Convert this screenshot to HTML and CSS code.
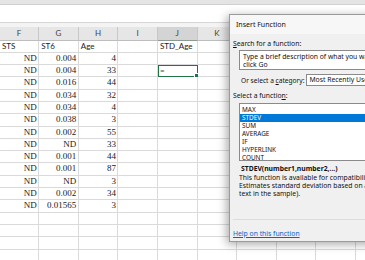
FILE: index.html
```html
<!DOCTYPE html>
<html lang="en">
<head>
  <meta charset="UTF-8">
  <title>Insert Function</title>
  <link rel="stylesheet" href="styles.css">
</head>
<body>
  <div class="app">
    <div class="ribbon-edge"></div>
    <div class="formula-bar"></div>
    <div class="sheet">
      <div class="row head">
        <div class="cell">F</div><div class="cell">G</div><div class="cell">H</div><div class="cell">I</div><div class="cell sel">J</div><div class="cell">K</div><div class="cell">L</div><div class="cell">M</div><div class="cell">N</div><div class="cell">O</div>
      </div>
      <div class="row">
        <div class="cell txt">STS</div><div class="cell txt">ST6</div><div class="cell txt">Age</div><div class="cell"></div><div class="cell txt">STD_Age</div><div class="cell"></div><div class="cell"></div><div class="cell"></div><div class="cell"></div><div class="cell"></div>
      </div>
      <div class="row">
        <div class="cell num">ND</div><div class="cell num">0.004</div><div class="cell num">4</div><div class="cell"></div><div class="cell"></div><div class="cell"></div><div class="cell"></div><div class="cell"></div><div class="cell"></div><div class="cell"></div>
      </div>
      <div class="row">
        <div class="cell num">ND</div><div class="cell num">0.004</div><div class="cell num">33</div><div class="cell"></div><div class="cell txt active">=</div><div class="cell"></div><div class="cell"></div><div class="cell"></div><div class="cell"></div><div class="cell"></div>
      </div>
      <div class="row">
        <div class="cell num">ND</div><div class="cell num">0.016</div><div class="cell num">44</div><div class="cell"></div><div class="cell"></div><div class="cell"></div><div class="cell"></div><div class="cell"></div><div class="cell"></div><div class="cell"></div>
      </div>
      <div class="row">
        <div class="cell num">ND</div><div class="cell num">0.034</div><div class="cell num">32</div><div class="cell"></div><div class="cell"></div><div class="cell"></div><div class="cell"></div><div class="cell"></div><div class="cell"></div><div class="cell"></div>
      </div>
      <div class="row">
        <div class="cell num">ND</div><div class="cell num">0.034</div><div class="cell num">4</div><div class="cell"></div><div class="cell"></div><div class="cell"></div><div class="cell"></div><div class="cell"></div><div class="cell"></div><div class="cell"></div>
      </div>
      <div class="row">
        <div class="cell num">ND</div><div class="cell num">0.038</div><div class="cell num">3</div><div class="cell"></div><div class="cell"></div><div class="cell"></div><div class="cell"></div><div class="cell"></div><div class="cell"></div><div class="cell"></div>
      </div>
      <div class="row">
        <div class="cell num">ND</div><div class="cell num">0.002</div><div class="cell num">55</div><div class="cell"></div><div class="cell"></div><div class="cell"></div><div class="cell"></div><div class="cell"></div><div class="cell"></div><div class="cell"></div>
      </div>
      <div class="row">
        <div class="cell num">ND</div><div class="cell num">ND</div><div class="cell num">33</div><div class="cell"></div><div class="cell"></div><div class="cell"></div><div class="cell"></div><div class="cell"></div><div class="cell"></div><div class="cell"></div>
      </div>
      <div class="row">
        <div class="cell num">ND</div><div class="cell num">0.001</div><div class="cell num">44</div><div class="cell"></div><div class="cell"></div><div class="cell"></div><div class="cell"></div><div class="cell"></div><div class="cell"></div><div class="cell"></div>
      </div>
      <div class="row">
        <div class="cell num">ND</div><div class="cell num">0.001</div><div class="cell num">87</div><div class="cell"></div><div class="cell"></div><div class="cell"></div><div class="cell"></div><div class="cell"></div><div class="cell"></div><div class="cell"></div>
      </div>
      <div class="row">
        <div class="cell num">ND</div><div class="cell num">ND</div><div class="cell num">3</div><div class="cell"></div><div class="cell"></div><div class="cell"></div><div class="cell"></div><div class="cell"></div><div class="cell"></div><div class="cell"></div>
      </div>
      <div class="row">
        <div class="cell num">ND</div><div class="cell num">0.002</div><div class="cell num">34</div><div class="cell"></div><div class="cell"></div><div class="cell"></div><div class="cell"></div><div class="cell"></div><div class="cell"></div><div class="cell"></div>
      </div>
      <div class="row">
        <div class="cell num">ND</div><div class="cell num">0.01565</div><div class="cell num">3</div><div class="cell"></div><div class="cell"></div><div class="cell"></div><div class="cell"></div><div class="cell"></div><div class="cell"></div><div class="cell"></div>
      </div>
      <div class="row">
        <div class="cell"></div><div class="cell"></div><div class="cell"></div><div class="cell"></div><div class="cell"></div><div class="cell"></div><div class="cell"></div><div class="cell"></div><div class="cell"></div><div class="cell"></div>
      </div>
      <div class="row">
        <div class="cell"></div><div class="cell"></div><div class="cell"></div><div class="cell"></div><div class="cell"></div><div class="cell"></div><div class="cell"></div><div class="cell"></div><div class="cell"></div><div class="cell"></div>
      </div>
      <div class="row">
        <div class="cell"></div><div class="cell"></div><div class="cell"></div><div class="cell"></div><div class="cell"></div><div class="cell"></div><div class="cell"></div><div class="cell"></div><div class="cell"></div><div class="cell"></div>
      </div>
      <div class="row">
        <div class="cell"></div><div class="cell"></div><div class="cell"></div><div class="cell"></div><div class="cell"></div><div class="cell"></div><div class="cell"></div><div class="cell"></div><div class="cell"></div><div class="cell"></div>
      </div>
    </div>
  </div>

  <div class="dialog">
    <div class="dialog-title">Insert Function</div>
    <div class="dialog-body">
      <div class="label"><u>S</u>earch for a function:</div>
      <div class="search-box">Type a brief description of what you want to do and then<br>click Go</div>
      <div class="category">
        <span>Or select a <u>c</u>ategory:</span>
        <div class="select">Most Recently Used</div>
      </div>
      <div class="label">Select a functio<u>n</u>:</div>
      <div class="list">
        <div class="item">MAX</div>
        <div class="item picked">STDEV</div>
        <div class="item">SUM</div>
        <div class="item">AVERAGE</div>
        <div class="item">IF</div>
        <div class="item">HYPERLINK</div>
        <div class="item">COUNT</div>
      </div>
      <div class="signature">STDEV(number1,number2,...)</div>
      <div class="desc">This function is available for compatibility with Excel 2007 and earlier.<br>Estimates standard deviation based on a sample (ignores logical values and<br>text in the sample).</div>
      <div class="separator"></div>
      <a class="help" href="#">Help on this function</a>
    </div>
  </div>
</body>
</html>
```

FILE: styles.css
```css
body {
  margin: 0;
  width: 365px;
  height: 260px;
  overflow: hidden;
  position: relative;
  background: #ffffff;
  font-family: 'Lato', 'Liberation Sans', sans-serif;
}

.ribbon-edge {
  height: 4px;
  background: #e4e4e4;
  border-bottom: 1px solid #d0d0d0;
}

.formula-bar {
  height: 17px;
  background: #ffffff;
  border-bottom: 1px solid #d6d6d6;
}

.sheet {
  padding-top: 4px;
  background: #f4f4f4;
}

.row {
  display: flex;
  height: 12.3px;
  background: #ffffff;
}

.cell {
  flex: 0 0 39.6px;
  box-sizing: border-box;
  border-right: 1px solid #dadada;
  border-bottom: 1px solid #dadada;
  font-size: 8px;
  line-height: 11.3px;
  color: #222;
  white-space: nowrap;
  overflow: visible;
  position: relative;
}

.cell:first-child {
  flex-basis: 39.2px;
}

.head {
  height: 13.5px;
  background: #e6e6e6;
}

.head .cell {
  text-align: center;
  color: #444;
  font-size: 8px;
  line-height: 13px;
  border-right: 1px solid #c8c8c8;
  border-bottom: 1px solid #bdbdbd;
}

.head .sel {
  background: #d4d4d4;
  border-bottom: 1px solid #8a9a90;
}

.txt {
  padding-left: 2px;
}

.num {
  text-align: right;
  padding-right: 1.5px;
  font-family: 'Liberation Serif', serif;
  font-size: 9px;
}

.active {
  outline: 1.5px solid #217346;
  outline-offset: -1px;
  color: #444;
}

.active::after {
  content: "";
  position: absolute;
  right: -2px;
  bottom: -2px;
  width: 3px;
  height: 3px;
  background: #217346;
  border: 1px solid #fff;
}

.dialog {
  position: absolute;
  left: 229px;
  top: 14px;
  width: 190px;
  height: 228px;
  box-sizing: border-box;
  background: #f0f0f0;
  border: 1px solid #9a9a9a;
  box-shadow: -2px 2px 9px rgba(0, 0, 0, 0.35);
  font-family: 'Noto Sans', 'Open Sans', sans-serif;
  font-size: 6.8px;
  color: #111;
}

.dialog-title {
  height: 19px;
  line-height: 19px;
  padding-left: 6px;
  background: #f7f7f7;
  font-size: 7px;
}

.dialog-body {
  padding-left: 3px;
  display: flex;
  flex-direction: column;
}

.label {
  line-height: 9px;
  margin-top: 5px;
}

.search-box {
  margin: 2px 0 0 6px;
  height: 20px;
  box-sizing: border-box;
  padding: 2px 3px;
  line-height: 8px;
  background: #ffffff;
  border: 1px solid #8a8a8a;
  white-space: nowrap;
}

.category {
  display: flex;
  align-items: center;
  margin: 4px 0 0 8px;
  gap: 2px;
  font-size: 6.6px;
}

.select {
  flex: 1;
  height: 12px;
  line-height: 10px;
  box-sizing: border-box;
  padding-left: 2px;
  background: #ffffff;
  border: 1px solid #8a8a8a;
  white-space: nowrap;
  font-size: 6.8px;
}

.list {
  margin: 3px 0 0 6px;
  height: 58px;
  box-sizing: border-box;
  padding-top: 2px;
  background: #ffffff;
  border: 1px solid #8a8a8a;
}

.item {
  height: 8px;
  line-height: 8px;
  padding-left: 2px;
  font-size: 6.4px;
}

.picked {
  background: #0078d7;
  color: #ffffff;
}

.signature {
  margin: 3px 0 0 8px;
  font-weight: bold;
  line-height: 9px;
}

.desc {
  margin: 1px 0 0 6px;
  line-height: 8px;
  white-space: nowrap;
}

.separator {
  margin-top: 21px;
  height: 1px;
  background: #dcdcdc;
}

.help {
  margin-top: 9px;
  line-height: 9px;
  color: #0066cc;
  font-size: 6.8px;
}
```
